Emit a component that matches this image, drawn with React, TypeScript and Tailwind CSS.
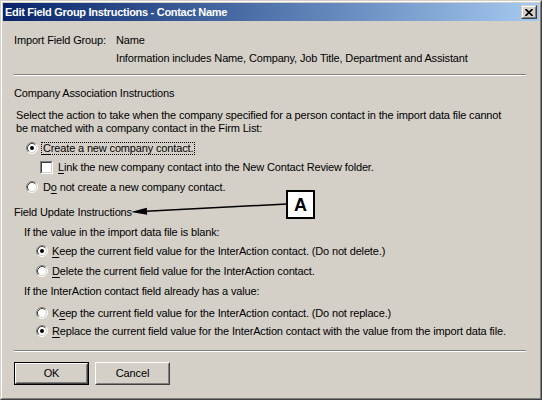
import React from "react";

function Radio({ checked }: { checked?: boolean }) {
  return (
    <svg width="12" height="12" viewBox="0 0 12 12" className="shrink-0">
      <circle cx="6" cy="6" r="5" fill="#ffffff" />
      <path d="M2.11 9.89 A5.5 5.5 0 0 1 9.89 2.11" stroke="#808080" fill="none" />
      <path d="M9.89 2.11 A5.5 5.5 0 0 1 2.11 9.89" stroke="#ffffff" fill="none" />
      <path d="M2.82 9.18 A4.5 4.5 0 0 1 9.18 2.82" stroke="#404040" fill="none" />
      <path d="M9.18 2.82 A4.5 4.5 0 0 1 2.82 9.18" stroke="#d4d0c8" fill="none" />
      {checked && <circle cx="6" cy="6" r="2" fill="#000000" />}
    </svg>
  );
}

function Checkbox() {
  return (
    <span className="block w-[13px] h-[13px] shrink-0 border border-t-[#808080] border-l-[#808080] border-b-white border-r-white">
      <span className="block w-full h-full border border-t-[#404040] border-l-[#404040] border-b-[#d4d0c8] border-r-[#d4d0c8] bg-white" />
    </span>
  );
}

function U({ children }: { children: React.ReactNode }) {
  return <span className="underline decoration-1 underline-offset-[2px]">{children}</span>;
}

export default function App() {
  return (
    <div className="relative w-[542px] h-[400px] font-['Liberation_Sans',Arial,sans-serif] text-[11px] tracking-[-0.15px] text-black border border-t-[#d4d0c8] border-l-[#d4d0c8] border-r-[#404040] border-b-[#404040]">
      <div className="h-full border border-t-white border-l-white border-r-[#808080] border-b-[#808080] p-[1px] bg-[#d4d0c8] flex flex-col">
        {/* Title bar */}
        <div className="h-[18px] shrink-0 bg-linear-to-r from-[#0a246a] to-[#a6caf0] flex items-center justify-between pl-[2px] pr-[2px]">
          <span className="text-white font-bold text-[11px] tracking-[-0.3px] leading-[14px]">
            Edit Field Group Instructions - Contact Name
          </span>
          <div className="w-[16px] h-[14px] border border-t-[#d4d0c8] border-l-[#d4d0c8] border-r-[#404040] border-b-[#404040]">
            <div className="w-full h-full border border-t-white border-l-white border-r-[#808080] border-b-[#808080] bg-[#d4d0c8] flex items-center justify-center">
              <svg width="8" height="7" viewBox="0 0 8 7">
                <path d="M0.5 0 L7.5 7 M7.5 0 L0.5 7" stroke="#000" strokeWidth="1.6" />
              </svg>
            </div>
          </div>
        </div>

        {/* Body */}
        <div className="flex flex-col pt-[10px] pl-[11px] leading-[13px]">
          <div className="h-[18px] flex items-center">
            <span className="w-[102px]">Import Field Group:</span>
            <span>Name</span>
          </div>
          <div className="h-[18px] flex items-center pl-[102px]">
            Information includes Name, Company, Job Title, Department and Assistant
          </div>

          <div className="mt-[7px] w-[512px] h-[2px] border-t border-t-[#808080] border-b border-b-white" />

          <div className="mt-[8px] h-[18px] flex items-center">Company Association Instructions</div>
          <div className="mt-[7px] pl-[2px] leading-[13px]">
            Select the action to take when the company specified for a person contact in the import data file cannot
            <br />
            be matched with a company contact in the Firm List:
          </div>

          <div className="mt-[4px] h-[18px] flex items-center pl-[12px] gap-[3px]">
            <Radio checked />
            <span className="border border-dotted border-black px-[1px] leading-[11px]">
              <U>C</U>reate a new company contact.
            </span>
          </div>
          <div className="mt-[1px] h-[18px] flex items-center pl-[26px] gap-[5px]">
            <Checkbox />
            <span>
              <U>L</U>ink the new company contact into the New Contact Review folder.
            </span>
          </div>
          <div className="mt-[2px] h-[18px] flex items-center pl-[12px] gap-[5px]">
            <Radio />
            <span>
              D<U>o</U> not create a new company contact.
            </span>
          </div>

          <div className="mt-[7px] h-[18px] flex items-center">Field Update Instructions</div>
          <div className="mt-[2px] h-[18px] flex items-center pl-[10px]">If the value in the import data file is blank:</div>
          <div className="mt-[1px] h-[18px] flex items-center pl-[22px] gap-[4px]">
            <Radio checked />
            <span>
              <U>K</U>eep the current field value for the InterAction contact. (Do not delete.)
            </span>
          </div>
          <div className="mt-[2px] h-[18px] flex items-center pl-[22px] gap-[4px]">
            <Radio />
            <span>
              <U>D</U>elete the current field value for the InterAction contact.
            </span>
          </div>
          <div className="mt-[2px] h-[18px] flex items-center pl-[10px]">
            If the InterAction contact field already has a value:
          </div>
          <div className="mt-[4px] h-[18px] flex items-center pl-[22px] gap-[4px]">
            <Radio />
            <span>
              K<U>e</U>ep the current field value for the InterAction contact. (Do not replace.)
            </span>
          </div>
          <div className="h-[18px] flex items-center pl-[22px] gap-[4px]">
            <Radio checked />
            <span>
              <U>R</U>eplace the current field value for the InterAction contact with the value from the import data file.
            </span>
          </div>

          <div className="mt-[10px] w-[512px] h-[2px] border-t border-t-[#808080] border-b border-b-white" />

          <div className="mt-[10px] flex gap-[6px]">
            <div className="w-[75px] h-[23px] border border-black">
              <div className="w-full h-full border border-t-white border-l-white border-r-[#404040] border-b-[#404040]">
                <div className="w-full h-full border border-t-[#d4d0c8] border-l-[#d4d0c8] border-r-[#808080] border-b-[#808080] flex items-center justify-center">
                  OK
                </div>
              </div>
            </div>
            <div className="w-[75px] h-[23px] border border-t-white border-l-white border-r-[#404040] border-b-[#404040]">
              <div className="w-full h-full border border-t-[#d4d0c8] border-l-[#d4d0c8] border-r-[#808080] border-b-[#808080] flex items-center justify-center">
                Cancel
              </div>
            </div>
          </div>
        </div>
      </div>

      {/* Annotation callout */}
      <svg
        className="absolute left-[-1px] top-[-1px] pointer-events-none"
        width="542"
        height="400"
        viewBox="0 0 542 400"
      >
        <line x1="146" y1="211.2" x2="287" y2="204" stroke="#000" strokeWidth="1.5" />
        <polygon points="131,212 147.2,214.7 146.8,207.7" fill="#000" />
      </svg>
      <div className="absolute left-[285px] top-[189px] w-[29px] h-[29px] border-2 border-black bg-white flex items-center justify-center font-bold text-[18px] tracking-normal leading-none">
        A
      </div>
    </div>
  );
}
